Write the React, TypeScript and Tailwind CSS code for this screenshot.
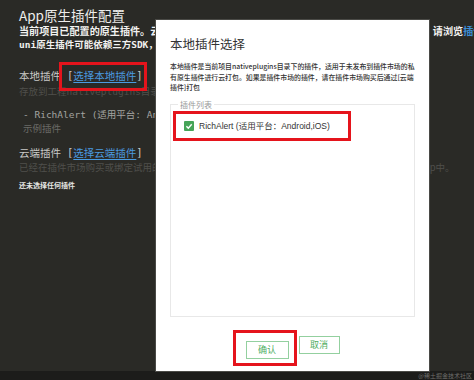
import React from "react";

const CJK = "font-['Noto_Sans_CJK_SC',sans-serif]";

export default function App() {
  return (
    <div className="relative w-[474px] h-[380px] overflow-hidden flex flex-col bg-[#2a2a26] font-['DejaVu_Sans_Mono','Noto_Sans_CJK_SC',monospace]">
      {/* page content */}
      <div className="flex-1 flex flex-col pl-[19px] pt-[6px] overflow-hidden whitespace-nowrap">
        <div className={`${CJK} text-[13.5px] leading-[18px] text-[#ededeb]`}>App原生插件配置</div>
        <div className={`${CJK} text-[10.1px] leading-[14px] font-bold text-[#f2f2f0]`}>
          当前项目已配置的原生插件。云端打包时会将这些原生插件打包进安装包，如需更多的插件，请浏览<span className="text-[#3d8fd6]">插件市场</span>
        </div>
        <div className="text-[9.5px] leading-[14px] font-bold text-[#f2f2f0]">uni原生插件可能依赖三方SDK，</div>

        <div className="mt-[17px] h-[14px] flex items-center text-[10.5px] text-[#c9c9c6]">
          <span className={CJK}>本地插件</span>
          <span className="relative ml-[6px] flex items-center">
            <span>[</span>
            <span className={`${CJK} text-[#4a9be0] underline underline-offset-2`}>选择本地插件</span>
            <span>]</span>
            <span className="absolute left-[-8px] right-[-4px] top-[-6px] bottom-[-7px] border-[3px] border-[#e5141c]"></span>
          </span>
        </div>
        <div className="mt-[3px] text-[9.5px] leading-[12px] text-[#4f4f4b]">存放到工程nativeplugins目录下的插件，用于离线打包及本地调试</div>

        <div className="mt-[10px] pl-[4px] text-[9.5px] leading-[14px] text-[#a3a3a0]">- RichAlert (适用平台: Android,iOS)</div>
        <div className={`${CJK} pl-[4px] text-[9.5px] leading-[12px] text-[#6a6a66]`}>示例插件</div>

        <div className="mt-[12px] h-[14px] flex items-center text-[10.5px] text-[#c9c9c6]">
          <span className={CJK}>云端插件</span>
          <span className="ml-[6px]">[</span>
          <span className={`${CJK} text-[#4a9be0] underline underline-offset-2`}>选择云端插件</span>
          <span>]</span>
        </div>
        <div className={`${CJK} mt-[1px] text-[9.5px] leading-[12px] text-[#4f4f4b]`}>
          已经在插件市场购买或绑定试用的云端插件，在提交云端打包时也会将这些云端插件自动打包到App中。
        </div>
        <div className={`${CJK} mt-[7px] text-[7px] leading-[10px] font-bold text-[#e6e6e3]`}>还未选择任何插件</div>
      </div>

      {/* bottom bar */}
      <div className="h-[9px] bg-[#1c1c1a] flex items-center justify-end pr-[2px]">
        <span className={`${CJK} text-[6px] leading-[8px] text-[#6e6e6a]`}>@稀土掘金技术社区</span>
      </div>

      {/* modal */}
      <div className="absolute left-[156px] top-[20px] w-[273px] h-[351px] bg-white shadow-[0_0_0_1px_#4a4a46] flex flex-col px-[14px] pt-[15px] font-['Liberation_Sans','Noto_Sans_CJK_SC',sans-serif]">
        <div className={`${CJK} text-[12.5px] leading-[18px] text-[#333]`}>本地插件选择</div>
        <div className={`${CJK} mt-[8px] flex flex-col whitespace-nowrap text-[6.9px] leading-[10.5px] font-medium text-[#333]`}>
          <span>本地插件是当前项目nativeplugins目录下的插件，适用于未发布到插件市场的私</span>
          <span>有原生插件进行云打包。如果是插件市场的插件，请在插件市场购买后通过[云端</span>
          <span>插件]打包</span>
        </div>
        <fieldset className="mt-[7px] h-[217px] border border-[#e8e8e8] px-[2px]">
          <legend className={`${CJK} ml-[5px] px-[2px] text-[8px] leading-[10px] text-[#9a9a9a]`}>插件列表</legend>
          <div className="mt-[1px] w-[178px] h-[30px] border-[3px] border-[#e5141c] flex items-center pl-[8px] gap-[5px]">
            <span className="w-[10px] h-[10px] rounded-[1px] bg-[#46a458] flex items-center justify-center">
              <svg width="10" height="10" viewBox="0 0 10 10">
                <polyline points="2.4,5.2 4.3,7.1 7.7,3.2" fill="none" stroke="#fff" strokeWidth="1.4" />
              </svg>
            </span>
            <span className="text-[8.5px] leading-[12px] text-[#333]">RichAlert (适用平台：Android,iOS)</span>
          </div>
        </fieldset>
        <div className="mt-[19px] flex justify-center gap-[10px]">
          <span className="relative">
            <button className={`${CJK} w-[43px] h-[18px] border border-[#93d09f] text-[9px] leading-[16px] text-[#4fae5f] bg-white`}>确认</button>
            <span className="absolute left-[-13px] right-[-8px] top-[-6px] bottom-[-6px] border-[3px] border-[#e5141c]"></span>
          </span>
          <button className={`${CJK} w-[41px] h-[18px] border border-[#93d09f] text-[9px] leading-[16px] text-[#4fae5f] bg-white`}>取消</button>
        </div>
      </div>
    </div>
  );
}
